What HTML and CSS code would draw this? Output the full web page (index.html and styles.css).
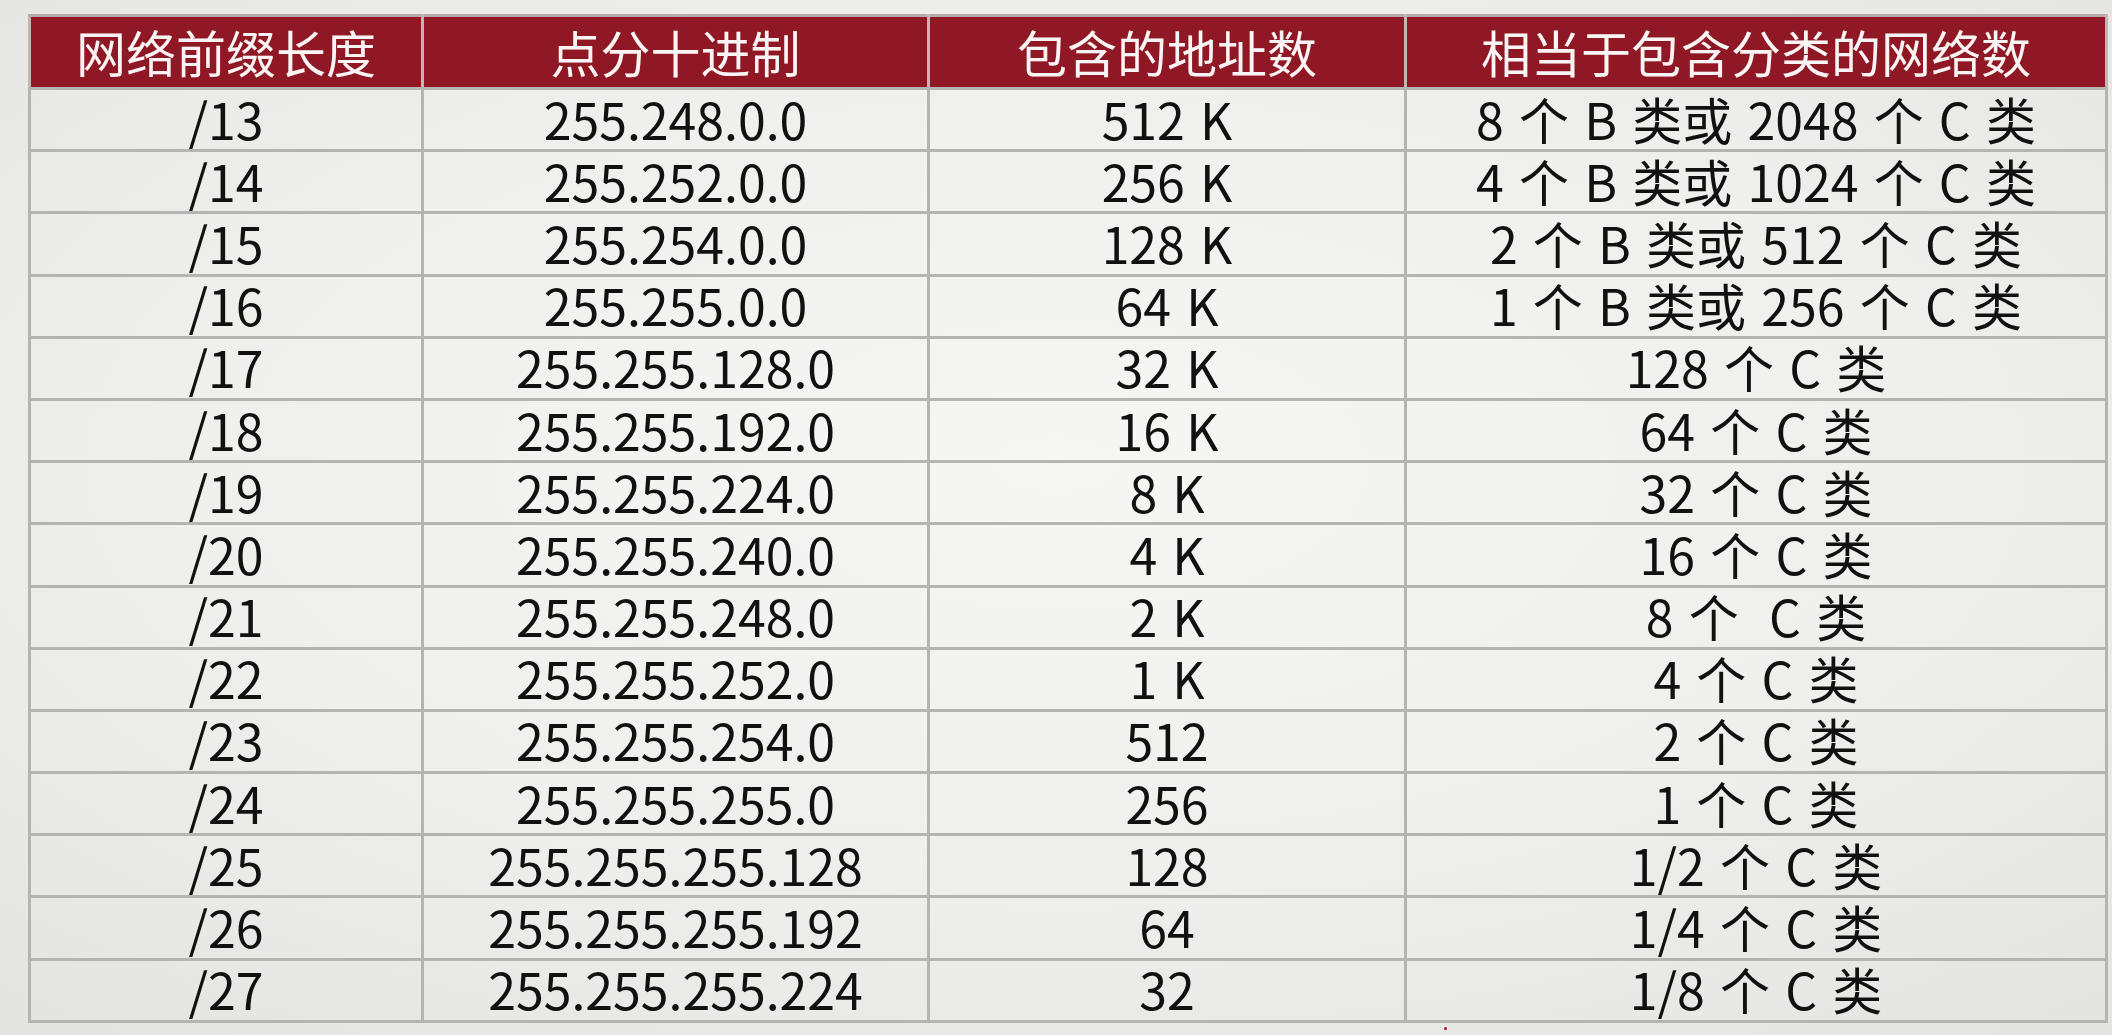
FILE: index.html
```html
<!DOCTYPE html>
<html lang="zh-CN">
<head>
<meta charset="utf-8">
<title>CIDR 地址块</title>
<link rel="stylesheet" href="styles.css">
</head>
<body>
<div class="slide">
  <table class="cidr">
    <colgroup>
      <col class="c1"><col class="c2"><col class="c3"><col class="c4">
    </colgroup>
    <thead>
      <tr>
        <th>网络前缀长度</th>
        <th>点分十进制</th>
        <th>包含的地址数</th>
        <th>相当于包含分类的网络数</th>
      </tr>
    </thead>
    <tbody>
      <tr><td>/13</td><td>255.248.0.0</td><td>512 K</td><td>8 个 B 类或 2048 个 C 类</td></tr>
      <tr><td>/14</td><td>255.252.0.0</td><td>256 K</td><td>4 个 B 类或 1024 个 C 类</td></tr>
      <tr><td>/15</td><td>255.254.0.0</td><td>128 K</td><td>2 个 B 类或 512 个 C 类</td></tr>
      <tr><td>/16</td><td>255.255.0.0</td><td>64 K</td><td>1 个 B 类或 256 个 C 类</td></tr>
      <tr><td>/17</td><td>255.255.128.0</td><td>32 K</td><td>128 个 C 类</td></tr>
      <tr><td>/18</td><td>255.255.192.0</td><td>16 K</td><td>64 个 C 类</td></tr>
      <tr><td>/19</td><td>255.255.224.0</td><td>8 K</td><td>32 个 C 类</td></tr>
      <tr><td>/20</td><td>255.255.240.0</td><td>4 K</td><td>16 个 C 类</td></tr>
      <tr><td>/21</td><td>255.255.248.0</td><td>2 K</td><td>8 个&nbsp; C 类</td></tr>
      <tr><td>/22</td><td>255.255.252.0</td><td>1 K</td><td>4 个 C 类</td></tr>
      <tr><td>/23</td><td>255.255.254.0</td><td>512</td><td>2 个 C 类</td></tr>
      <tr><td>/24</td><td>255.255.255.0</td><td>256</td><td>1 个 C 类</td></tr>
      <tr><td>/25</td><td>255.255.255.128</td><td>128</td><td>1/2 个 C 类</td></tr>
      <tr><td>/26</td><td>255.255.255.192</td><td>64</td><td>1/4 个 C 类</td></tr>
      <tr><td>/27</td><td>255.255.255.224</td><td>32</td><td>1/8 个 C 类</td></tr>
    </tbody>
  </table>
  <span class="dot"></span>
</div>
</body>
</html>
```

FILE: styles.css
```css
html, body {
  margin: 0;
  padding: 0;
  width: 2112px;
  height: 1035px;
  overflow: hidden;
}

body {
  background: radial-gradient(ellipse 75% 70% at 50% 45%, #f6f6f4 0%, #efefed 55%, #e4e4e2 100%);
  font-family: "Noto Sans CJK SC", "Noto Sans", sans-serif;
  color: #111;
}

.slide {
  position: relative;
  padding: 14px 0 0 28px;
}

.cidr {
  width: 2077px;
  border-collapse: collapse;
  table-layout: fixed;
}

.c1 { width: 393px; }
.c2 { width: 506px; }
.c3 { width: 477px; }
.c4 { width: 701px; }

.cidr th,
.cidr td {
  border: 3px solid #b4b4b2;
  text-align: center;
  vertical-align: middle;
  white-space: nowrap;
  line-height: 1;
}

.cidr thead th {
  background: #901825;
  color: #fbf4f4;
  font-weight: 400;
  font-size: 50px;
  height: 68px;
  padding: 0 0 2px 0;
  border-color: #b9a9aa #c4b4b4 #b4b4b2 #c4b4b4;
}

.cidr tbody td {
  font-size: 50px;
  height: 55.2px;
  padding: 0 0 4px 0;
  word-spacing: 4px;
}

.dot {
  position: absolute;
  left: 1444px;
  top: 1027px;
  width: 3px;
  height: 3px;
  border-radius: 50%;
  background: #b01020;
}
```
